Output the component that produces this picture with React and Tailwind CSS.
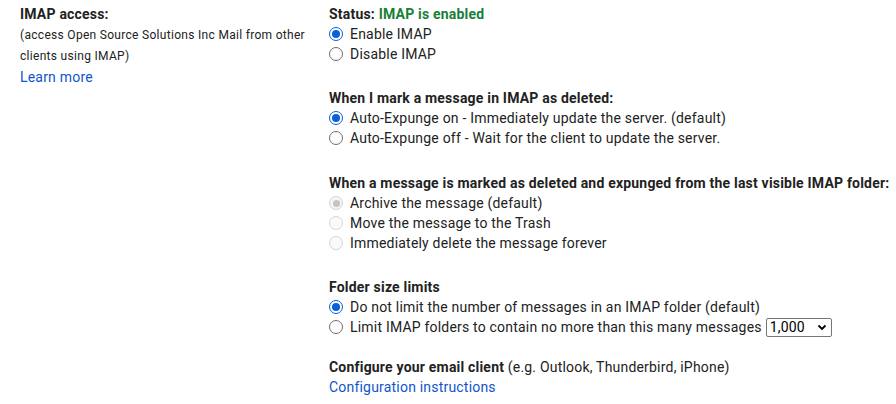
import React from "react";

function Radio({ checked, disabled, disabledChecked, label, children }) {
  let circle;
  if (checked) {
    circle = (
      <span className="w-[14px] h-[14px] rounded-full border-[1.5px] border-[#0b5fd8] bg-white flex items-center justify-center shrink-0">
        <span className="w-[8px] h-[8px] rounded-full bg-[#0b5fd8]" />
      </span>
    );
  } else if (disabledChecked) {
    circle = (
      <span className="w-[14px] h-[14px] rounded-full border border-[#d4d4d4] bg-[#f4f4f4] flex items-center justify-center shrink-0">
        <span className="w-[7px] h-[7px] rounded-full bg-[#c4c4c4]" />
      </span>
    );
  } else if (disabled) {
    circle = <span className="w-[14px] h-[14px] rounded-full border border-[#d4d4d4] bg-[#fafafa] shrink-0" />;
  } else {
    circle = <span className="w-[14px] h-[14px] rounded-full border border-[#6e6e6e] bg-white shrink-0" />;
  }
  return (
    <div className="flex items-center h-[20px]">
      {circle}
      <span className="ml-[7px] whitespace-nowrap text-[#222]">{label}</span>
      {children}
    </div>
  );
}

export default function App() {
  return (
    <div className="w-[896px] h-[404px] bg-white overflow-hidden text-[#222] text-[14px] leading-[20px] tracking-[0.2px]" style={{ fontFamily: "Roboto, 'Liberation Sans', Arial, sans-serif" }}>
      <div className="flex pt-[4px]">
        <div className="w-[329px] pl-[20px] shrink-0">
          <div className="font-bold h-[20px] leading-[20px]">IMAP access:</div>
          <div className="text-[12px] leading-[21px] mt-[1px] tracking-[0.3px]">
            (access Open Source Solutions Inc Mail from other<br />clients using IMAP)
          </div>
          <div className="text-[#1155cc] leading-[20px]">Learn more</div>
        </div>
        <div className="flex-1">
          <div className="font-bold">
            Status: <span className="text-[#188038]">IMAP is enabled</span>
          </div>
          <Radio checked label="Enable IMAP" />
          <Radio label="Disable IMAP" />

          <div className="font-bold mt-[24px]">When I mark a message in IMAP as deleted:</div>
          <Radio checked label="Auto-Expunge on - Immediately update the server. (default)" />
          <Radio label="Auto-Expunge off - Wait for the client to update the server." />

          <div className="font-bold mt-[25px]">When a message is marked as deleted and expunged from the last visible IMAP folder:</div>
          <Radio disabledChecked label="Archive the message (default)" />
          <Radio disabled label="Move the message to the Trash" />
          <Radio disabled label="Immediately delete the message forever" />

          <div className="font-bold mt-[24px]">Folder size limits</div>
          <Radio checked label="Do not limit the number of messages in an IMAP folder (default)" />
          <Radio label="Limit IMAP folders to contain no more than this many messages">
            <span className="ml-[4px] h-[19px] w-[66px] border border-[#767676] rounded-[2px] flex items-center justify-between pl-[3px] pr-[4px] text-[14px] leading-none text-black">
              <span>1,000</span>
              <svg width="10" height="7" viewBox="0 0 10 7"><path d="M1.5 1.5 L5 5 L8.5 1.5" fill="none" stroke="#000" strokeWidth="1.8" /></svg>
            </span>
          </Radio>

          <div className="mt-[20px]">
            <span className="font-bold">Configure your email client</span> (e.g. Outlook, Thunderbird, iPhone)
          </div>
          <div className="text-[#1155cc]">Configuration instructions</div>
        </div>
      </div>
    </div>
  );
}
